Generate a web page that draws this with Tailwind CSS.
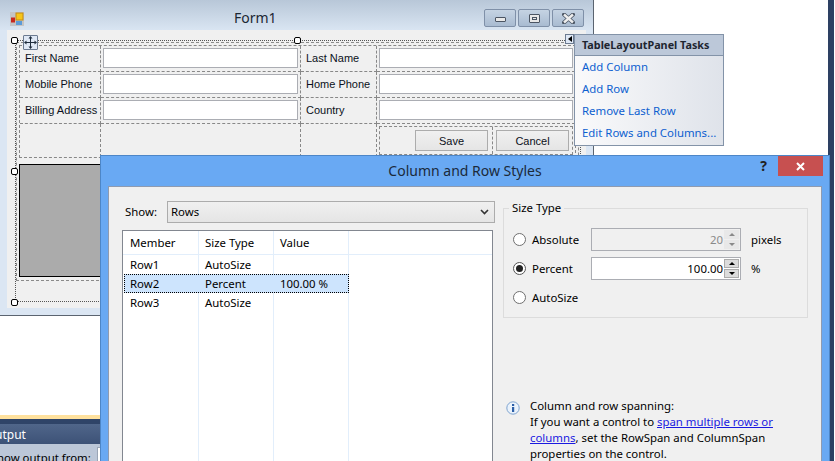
<!DOCTYPE html>
<html><head><meta charset="utf-8"><script src="https://cdn.jsdelivr.net/npm/@tailwindcss/browser@4"></script></head>
<body class="m-0 bg-white">
<div class="relative w-[835px] h-[461px] overflow-hidden bg-white font-['Noto_Sans',sans-serif] text-[11.4px] text-black">
<div class="absolute left-[828px] top-0 w-[6px] h-[461px] bg-[#2d4063]"></div>

<!-- Output pane -->
<div class="absolute left-0 top-[415px] w-[100px] h-[46px] flex flex-col overflow-hidden">
  <div class="h-[4px] shrink-0 bg-[#ffe19d]"></div>
  <div class="h-[5px] shrink-0 bg-[#2f4468]"></div>
  <div class="h-[20px] shrink-0 bg-gradient-to-b from-[#50668a] to-[#3d5277] text-white text-[12px] leading-[21px] -ml-[5px]">utput</div>
  <div class="relative flex-1 bg-[#bcc7d8] text-[11.4px] leading-[17px] pt-[5px] -ml-[3px] whitespace-nowrap">how output from:<span class="absolute left-[100px] top-[3px] w-[3px] h-[20px] bg-white border border-[#9aa5b5] border-r-0"></span></div>
</div>

<!-- Form1 window -->
<div class="absolute left-0 top-0 w-[594px] h-[316px] border-r border-b border-[#5b6470] rounded-tl-[5px] bg-[#dbe6f3] flex flex-col pl-[7px] pr-[7px] pb-[7px]">
  <div class="h-[30px] shrink-0 -mx-[7px] pl-[10px] pr-[9px] bg-gradient-to-b from-[#b8c7d8] to-[#d9e5f2] flex items-center relative">
    <svg width="14" height="14" viewBox="0 0 14 14" class="mt-[7px]"><rect x="0" y="0" width="14" height="14" fill="#c4c4c4"/><rect x="6" y="1" width="7" height="7" fill="#f5c518" stroke="#c48a10"/><rect x="1" y="5.5" width="4" height="5" fill="#c8281e"/><rect x="6" y="9" width="6" height="4" fill="#5b9bd8"/></svg>
    <span class="absolute left-[234px] top-[8px] text-[14px] leading-[20px] text-[#1c2733]">Form1</span>
    <div class="ml-auto mt-[9px] flex gap-[2px] self-start">
      <div class="w-[32px] h-[18px] border border-[#7f90a8] rounded-[2px] bg-gradient-to-b from-[#c5d3e3] to-[#a9bbd1] flex items-center justify-center"><span class="block w-[11px] h-[5px] mt-[3px] bg-[#e8e8e8] border border-[#4b5563] rounded-[1px]"></span></div>
      <div class="w-[32px] h-[18px] border border-[#7f90a8] rounded-[2px] bg-gradient-to-b from-[#c5d3e3] to-[#a9bbd1] flex items-center justify-center"><span class="flex items-center justify-center w-[11px] h-[9px] bg-[#e8e8e8] border border-[#4b5563] rounded-[1px]"><span class="block w-[5px] h-[3px] border border-[#4b5563]"></span></span></div>
      <div class="w-[32px] h-[18px] border border-[#7f90a8] rounded-[2px] bg-gradient-to-b from-[#c5d3e3] to-[#a9bbd1] flex items-center justify-center"><svg width="13" height="11" viewBox="0 0 13 11"><path d="M2 1.5 L11 9.5 M11 1.5 L2 9.5" stroke="#4b5563" stroke-width="4" stroke-linecap="round"/><path d="M2 1.5 L11 9.5 M11 1.5 L2 9.5" stroke="#eeeeee" stroke-width="2.4"/></svg></div>
    </div>
  </div>
  <!-- client -->
  <div class="relative flex-1 bg-[#f0f0f0] font-['Liberation_Sans',sans-serif] text-[11px] text-[#0b1020]">
    <!-- designer selection outline -->
    <div class="absolute left-[8px] top-[10px] w-[566px] h-[262px] border border-dotted border-[#555]"></div>
    <!-- outer table -->
    <div class="absolute left-[9px] top-[12px] w-[563px] h-[239px] border border-dashed border-[#8a8a8a] p-[2px] flex flex-col leading-[14px]">
      <div class="h-[113px] shrink-0 border border-dashed border-[#888] grid grid-cols-[81px_200px_76px_1fr] grid-rows-[26px_26px_26px_1fr]">
        <div class="border-r border-b border-dashed border-[#888] flex items-center pl-[5px] pb-[2px]">First Name</div>
        <div class="border-r border-b border-dashed border-[#888] p-[2px]"><div class="h-[20px] bg-white border border-[#abadb3]"></div></div>
        <div class="border-r border-b border-dashed border-[#888] flex items-center pl-[5px] pb-[2px]">Last Name</div>
        <div class="border-b border-dashed border-[#888] p-[2px]"><div class="h-[20px] bg-white border border-[#abadb3]"></div></div>
        <div class="border-r border-b border-dashed border-[#888] flex items-center pl-[5px] pb-[2px] whitespace-nowrap">Mobile Phone</div>
        <div class="border-r border-b border-dashed border-[#888] p-[2px]"><div class="h-[20px] bg-white border border-[#abadb3]"></div></div>
        <div class="border-r border-b border-dashed border-[#888] flex items-center pl-[5px] pb-[2px] whitespace-nowrap">Home Phone</div>
        <div class="border-b border-dashed border-[#888] p-[2px]"><div class="h-[20px] bg-white border border-[#abadb3]"></div></div>
        <div class="border-r border-b border-dashed border-[#888] flex items-center pl-[5px] pb-[2px] whitespace-nowrap">Billing Address</div>
        <div class="border-r border-b border-dashed border-[#888] p-[2px]"><div class="h-[20px] bg-white border border-[#abadb3]"></div></div>
        <div class="border-r border-b border-dashed border-[#888] flex items-center pl-[5px] pb-[2px]">Country</div>
        <div class="border-b border-dashed border-[#888] p-[2px]"><div class="h-[20px] bg-white border border-[#abadb3]"></div></div>
        <div class="border-r border-dashed border-[#888]"></div>
        <div class="border-r border-dashed border-[#888]"></div>
        <div class="border-r border-dashed border-[#888]"></div>
        <div class="p-[2px]"><div class="h-full border border-dashed border-[#888] flex pt-[3px]">
          <div class="flex-1 flex justify-end pr-[4px]"><div class="w-[73px] h-[21px] border border-[#acacac] bg-gradient-to-b from-[#f0f0f0] to-[#e5e5e5] flex items-center justify-center">Save</div></div>
          <div class="w-[80px] -mt-[3px] pt-[3px] pl-[3px] border-l border-dashed border-[#888]"><div class="w-[73px] h-[21px] border border-[#acacac] bg-gradient-to-b from-[#f0f0f0] to-[#e5e5e5] flex items-center justify-center">Cancel</div></div>
        </div></div>
      </div>
      <div class="mt-[6px] h-[113px] w-[400px] shrink-0 bg-[#ababab] border border-black"></div>
    </div>
    <!-- handles -->
    <div class="absolute left-[4px] top-[7px] w-[7px] h-[7px] rounded-[2px] bg-white border border-black"></div>
    <div class="absolute left-[287px] top-[7px] w-[7px] h-[7px] rounded-[2px] bg-white border border-black"></div>
    <div class="absolute left-[4px] top-[138px] w-[7px] h-[7px] rounded-[2px] bg-white border border-black"></div>
    <div class="absolute left-[4px] top-[269px] w-[7px] h-[7px] rounded-[2px] bg-white border border-black"></div>
    <!-- move glyph -->
    <div class="absolute left-[16px] top-[5px] w-[15px] h-[15px] bg-[#dfe8f5] border border-[#6b7a90] rounded-[1px] flex items-center justify-center">
      <svg width="13" height="13" viewBox="0 0 13 13"><path d="M6.5 1v11M1 6.5h11" stroke="#1f2d3d" stroke-width="1"/><path d="M6.5 0L4.5 2.5h4zM6.5 13L4.5 10.5h4zM0 6.5L2.5 4.5v4zM13 6.5L10.5 4.5v4z" fill="#1f2d3d"/></svg>
    </div>
    <!-- smart tag -->
    <div class="absolute left-[558px] top-[4px] w-[9px] h-[10px] bg-[#dfe8f5] border border-[#6b7a90] flex items-center justify-center"><span class="block w-0 h-0 border-y-[3px] border-y-transparent border-r-[4px] border-r-black"></span></div>
  </div>
</div>

<!-- Tasks panel -->
<div class="absolute left-[574px] top-[34px] w-[150px] h-[112px] border border-[#8393a8] bg-gradient-to-r from-[#fafafb] to-[#dfe3ea]">
  <div class="h-[21px] bg-[#bcc8d9] border-b border-[#8393a8] pl-[7px] font-bold text-[10.8px] leading-[19px] text-[#1e2530] whitespace-nowrap">TableLayoutPanel Tasks</div>
  <div class="pl-[7px] flex flex-col text-[#0d5fd0] leading-[22px] whitespace-nowrap">
    <span>Add Column</span><span>Add Row</span><span>Remove Last Row</span><span>Edit Rows and Columns...</span>
  </div>
</div>

<!-- Dialog -->
<div class="absolute left-[100px] top-[155px] w-[730px] h-[306px] bg-[#69a9f3] border-t border-l border-r border-[#4d86c7] px-[7px] flex flex-col">
  <div class="h-[30px] shrink-0 relative text-center text-[14px] leading-[30px] text-[#1b2a3b]">Column and Row Styles
    <span class="absolute right-[55px] top-0 font-bold text-[14px] leading-[20px] text-[#222]">?</span>
    <span class="absolute right-[-1px] top-0 w-[45px] h-[20px] bg-[#c75050] flex items-center justify-center"><svg width="9" height="9" viewBox="0 0 9 9"><path d="M1 1l7 7M8 1L1 8" stroke="#fff" stroke-width="2"/></svg></span>
  </div>
  <div class="flex-1 bg-[#f0f0f0] border border-[#8f9bb0] border-b-0 px-[13px] pt-[14px] flex gap-[10px]">
    <div class="w-[371px] shrink-0 flex flex-col">
      <div class="flex items-center h-[22px] pl-[3px] gap-[10px] -mr-[2px]">
        <span class="w-[32px] leading-[16px]">Show:</span>
        <div class="flex-1 h-[22px] border border-[#acacac] bg-gradient-to-b from-[#f0f0f0] to-[#e5e5e5] flex items-center pl-[3px] pr-[5px] justify-between"><span>Rows</span><svg width="9" height="6" viewBox="0 0 9 6"><path d="M1 1l3.5 3.5L8 1" fill="none" stroke="#333" stroke-width="1.6"/></svg></div>
      </div>
      <div class="mt-[7px] flex-1 bg-white border border-[#828790] border-b-0 relative">
        <div class="absolute top-0 bottom-0 left-[75px] w-px bg-[#e2eefb]"></div>
        <div class="absolute top-0 bottom-0 left-[150px] w-px bg-[#e2eefb]"></div>
        <div class="absolute top-0 bottom-0 left-[225px] w-px bg-[#e2eefb]"></div>
        <div class="h-[24px] border-b border-[#e2eefb] grid grid-cols-[75px_75px_75px] items-center relative"><span class="pl-[7px]">Member</span><span class="pl-[7px]">Size Type</span><span class="pl-[7px]">Value</span></div>
        <div class="h-[19px] grid grid-cols-[75px_75px_75px] items-center relative"><span class="pl-[7px]">Row1</span><span class="pl-[7px]">AutoSize</span><span></span></div>
        <div class="ml-[1px] w-[225px] h-[19px] bg-[#cde4fd] outline-1 -outline-offset-1 outline-dotted outline-black grid grid-cols-[74px_75px_75px] items-center relative"><span class="pl-[6px]">Row2</span><span class="pl-[7px]">Percent</span><span class="pl-[7px]">100.00 %</span></div>
        <div class="h-[20px] grid grid-cols-[75px_75px_75px] items-center relative"><span class="pl-[7px]">Row3</span><span class="pl-[7px]">AutoSize</span><span></span></div>
      </div>
    </div>
    <div class="flex-1 flex flex-col">
      <div class="relative h-[110px] mt-[7px] border border-[#dcdcdc] pt-[19px] pl-[9px]">
        <span class="absolute left-[5px] -top-[9px] bg-[#f0f0f0] px-[3px] leading-[16px]">Size Type</span>
        <div class="grid grid-cols-[78px_160px_auto] gap-y-[6px] items-center leading-[16px]">
          <div class="flex items-center gap-[6px] h-[23px]"><span class="w-[13px] h-[13px] rounded-full bg-white border border-[#707070]"></span>Absolute</div>
          <div class="w-[150px] h-[23px] border border-[#abadb3] flex items-center justify-end text-[#8a8a8a] relative pr-[17px]">20<div class="absolute right-[1px] top-[1px] w-[15px] h-[19px] flex flex-col gap-[1px]"><span class="flex-1 bg-[#e8e8e8] flex items-center justify-center"><span class="block w-0 h-0 border-x-[3px] border-x-transparent border-b-[3px] border-b-[#8a8a8a]"></span></span><span class="flex-1 bg-[#e8e8e8] flex items-center justify-center"><span class="block w-0 h-0 border-x-[3px] border-x-transparent border-t-[3px] border-t-[#8a8a8a]"></span></span></div></div>
          <span>pixels</span>
          <div class="flex items-center gap-[6px] h-[23px]"><span class="w-[13px] h-[13px] rounded-full bg-white border border-[#555] flex items-center justify-center"><span class="block w-[7px] h-[7px] rounded-full bg-[#222]"></span></span>Percent</div>
          <div class="w-[150px] h-[23px] border border-[#abadb3] bg-white flex items-center justify-end relative pr-[17px]">100.00<div class="absolute right-[1px] top-[1px] w-[15px] h-[19px] flex flex-col gap-[1px]"><span class="flex-1 bg-[#dcdcdc] border border-[#acacac] flex items-center justify-center"><span class="block w-0 h-0 border-x-[3px] border-x-transparent border-b-[3px] border-b-black"></span></span><span class="flex-1 bg-[#dcdcdc] border border-[#acacac] flex items-center justify-center"><span class="block w-0 h-0 border-x-[3px] border-x-transparent border-t-[3px] border-t-black"></span></span></div></div>
          <span>%</span>
          <div class="flex items-center gap-[6px] h-[23px] col-span-3"><span class="w-[13px] h-[13px] rounded-full bg-white border border-[#707070]"></span>AutoSize</div>
        </div>
      </div>
      <div class="mt-[80px] flex items-start gap-[10px] leading-[16px] pl-[3px]">
        <svg width="14" height="14" viewBox="0 0 14 14" class="mt-[3px] shrink-0"><circle cx="7" cy="7" r="6.2" fill="#eaf2fb" stroke="#7fa4d0"/><rect x="6" y="6" width="2.2" height="5" fill="#2c5fa8"/><rect x="6" y="3" width="2.2" height="2" fill="#2c5fa8"/></svg>
        <div class="whitespace-nowrap">Column and row spanning:<br>If you want a control to <span class="text-[#1a1ae0] underline">span multiple rows or<br>columns</span>, set the RowSpan and ColumnSpan<br>properties on the control.</div>
      </div>
    </div>
  </div>
</div>
</div>
</body></html>
